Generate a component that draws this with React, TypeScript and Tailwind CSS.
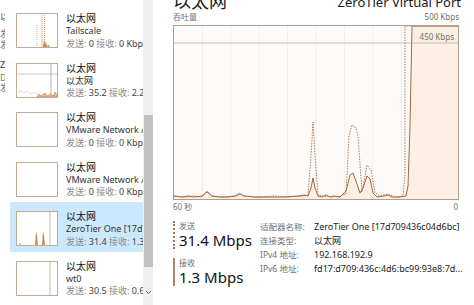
import React from 'react';

type Adapter = {
  title: string;
  name: string;
  send: string;
  recv: string;
  thumb: 'tailscale' | 'ethernet' | 'empty' | 'zerotier' | 'wt0';
  selected?: boolean;
};

const adapters: Adapter[] = [
  { title: '以太网', name: 'Tailscale', send: '0', recv: '0 Kbps', thumb: 'tailscale' },
  { title: '以太网', name: '以太网', send: '35.2', recv: '2.2 Mbps', thumb: 'ethernet' },
  { title: '以太网', name: 'VMware Network Adapter VMnet1', send: '0', recv: '0 Kbps', thumb: 'empty' },
  { title: '以太网', name: 'VMware Network Adapter VMnet8', send: '0', recv: '0 Kbps', thumb: 'empty' },
  { title: '以太网', name: 'ZeroTier One [17d709436c04d6bc]', send: '31.4', recv: '1.3 Mbps', thumb: 'zerotier', selected: true },
  { title: '以太网', name: 'wt0', send: '30.5', recv: '0.6 Mbps', thumb: 'wt0' },
];

const details = [
  ['适配器名称:', 'ZeroTier One [17d709436c04d6bc]'],
  ['连接类型:', '以太网'],
  ['IPv4 地址:', '192.168.192.9'],
  ['IPv6 地址:', 'fd17:d709:436c:4d6:bc99:93e8:7d...'],
];

// graph points, inner box 284 x 173
const recv = [
  [0, 170], [8, 171], [14, 170], [20, 171], [28, 170], [33, 166], [38, 170], [45, 171], [55, 171], [62, 170],
  [66, 168], [70, 170], [80, 171], [95, 171], [110, 171], [125, 170], [130, 169], [134, 170], [137, 162],
  [139, 152], [141, 162], [144, 170], [148, 171], [152, 169], [156, 171], [160, 170], [166, 171], [172, 165],
  [176, 149], [179, 147], [183, 158], [186, 167], [189, 162], [193, 150], [196, 153], [199, 167], [203, 171],
  [210, 170], [214, 169], [218, 171], [226, 171], [232, 170], [234, 160], [236, 100], [238, 0], [284, 0],
];

const send = [
  [0, 170], [10, 171], [20, 170], [28, 171], [33, 165], [38, 170], [48, 171], [60, 170], [66, 167], [70, 170],
  [85, 171], [100, 170], [115, 171], [128, 170], [134, 169], [137, 130], [139, 96], [141, 130], [144, 169],
  [150, 170], [158, 171], [166, 170], [172, 168], [175, 110], [178, 99], [182, 102], [184, 110], [188, 166],
  [191, 150], [193, 139], [197, 144], [199, 155], [201, 167], [206, 170], [214, 168], [222, 171], [229, 170],
  [231, 150], [231, 0], [284, 0],
];

const pts = (p: number[][]) => p.map((q) => q.join(',')).join(' ');

function Thumb({ kind }: { kind: Adapter['thumb'] }) {
  return (
    <svg viewBox="0 0 40 33" preserveAspectRatio="none" className="h-full w-full">
      {kind === 'tailscale' && (
        <>
          <line x1="20" y1="11" x2="20" y2="33" stroke="#b8a18a" strokeWidth="0.8" strokeDasharray="1 1" />
          <line x1="25" y1="1" x2="25" y2="33" stroke="#cfae90" strokeWidth="0.8" />
          <line x1="27.5" y1="1" x2="27.5" y2="33" stroke="#b98a63" strokeWidth="0.8" strokeDasharray="1 1" />
          <polygon points="26,33 27,25 28,31 29,27 30,33" fill="#c8804a" />
          <polygon points="30,33 31,30 33,33" fill="#d99a66" />
        </>
      )}
      {kind === 'ethernet' && (
        <>
          <line x1="0" y1="10" x2="40" y2="10" stroke="#c6b5a5" strokeWidth="0.8" />
          <line x1="34" y1="0" x2="34" y2="33" stroke="#b09a86" strokeWidth="0.8" />
          <polyline points="1,29 4,26 6,29 10,27 14,30 18,28 22,31" fill="none" stroke="#b5a697" strokeWidth="0.7" strokeDasharray="1 0.8" />
          <polygon points="20,33 22,30 24,32 28,29 30,32 34,30 36,32 38,28 40,31 40,33" fill="#e8b98f" stroke="#c07a45" strokeWidth="0.6" />
        </>
      )}
      {kind === 'zerotier' && (
        <>
          <line x1="33" y1="0" x2="33" y2="33" stroke="#c0a48a" strokeWidth="0.8" />
          <polygon points="18,33 19,19 20,24 21,33" fill="#d18a52" />
          <polygon points="25,33 26,19 27,24 28,33" fill="#d18a52" />
          <circle cx="3" cy="32" r="0.7" fill="#a0663a" />
        </>
      )}
      {kind === 'wt0' && <line x1="33" y1="0" x2="33" y2="33" stroke="#c0a48a" strokeWidth="0.8" />}
    </svg>
  );
}

function AdapterItem({ a }: { a: Adapter }) {
  return (
    <div className={`flex h-[49.5px] ${a.selected ? 'bg-[#cce8ff]' : ''}`}>
      <div className="ml-[6px] mt-[9px] h-[35px] w-[42px] shrink-0 border border-[#c2ab93] bg-white">
        <Thumb kind={a.thumb} />
      </div>
      <div className="ml-[8px] whitespace-nowrap pt-[7px]">
        <div className="text-[10px] leading-[14px] text-[#111]">{a.title}</div>
        <div className="text-[9px] leading-[12.5px] text-[#333]">{a.name}</div>
        <div className="text-[9px] leading-[12.5px] text-[#8a8a8a]">
          发送: <span className="text-[#444]">{a.send}</span> 接收: <span className="text-[#444]">{a.recv}</span>
        </div>
      </div>
    </div>
  );
}

export default function App() {
  return (
    <div className="flex h-[305px] w-[474px] overflow-hidden bg-white font-['Noto_Sans','Noto_Sans_CJK_SC',sans-serif] text-[#1a1a1a]">
      {/* edge of the pane on the left */}
      <div className="w-[10px] shrink-0">
        <div className="w-[5px] overflow-hidden whitespace-nowrap text-[9px] leading-[10px] text-[#777]">
          <div className="mt-[11.5px] text-[#555]">以太网</div>
          <div className="mt-[7.5px]">发送</div>
          <div className="mt-[0.5px]">发送</div>
          <div className="mt-[10px] text-[#333]">Z</div>
          <div className="mt-[3px]">D</div>
          <div>发送</div>
        </div>
      </div>

      {/* adapter list */}
      <div className="w-[133px] shrink-0 overflow-hidden pt-[4px]">
        {adapters.map((a, i) => (
          <AdapterItem key={i} a={a} />
        ))}
      </div>

      {/* scrollbar */}
      <div className="flex w-[10px] shrink-0 flex-col items-center bg-[#f0f0f0]">
        <div className="mt-[115px] h-[152px] w-[9px] bg-[#c1c1c1]" />
        <svg width="7" height="5" viewBox="0 0 7 5" className="mt-[23px]">
          <polyline points="1,1 3.5,3.5 6,1" fill="none" stroke="#606060" strokeWidth="1" />
        </svg>
      </div>

      {/* details */}
      <div className="flex min-w-0 flex-1 flex-col pl-[20px] pr-[15px]">
        <div className="flex h-[12px] items-start justify-between whitespace-nowrap">
          <span className="mt-[-8.5px] text-[18px] leading-[18px]">以太网</span>
          <span className="mt-[-4.5px] mr-[-2px] text-[13px] leading-[13px]">ZeroTier Virtual Port</span>
        </div>
        <div className="mb-[3px] flex h-[10px] justify-between text-[8px] leading-[10px] text-[#707070]">
          <span>吞吐量</span>
          <span>500 Kbps</span>
        </div>

        <div className="relative h-[175px] border border-[#b3a08c] bg-[#fdfbf9]">
          <svg viewBox="0 0 284 173" preserveAspectRatio="none" className="absolute inset-0 h-full w-full">
            {[28.4, 56.8, 85.2, 113.6, 142, 170.4, 198.8, 227.2, 255.6].map((x) => (
              <line key={x} x1={x} y1="0" x2={x} y2="173" stroke="#f5eee7" strokeWidth="1" />
            ))}
            <polygon points={`${pts(recv)} 284,173 0,173`} fill="#fcefe4" />
            <line x1="0" y1="17" x2="284" y2="17" stroke="#cdbba8" strokeWidth="1" />
            <polyline points={pts(send)} fill="none" stroke="#b07a52" strokeWidth="1" strokeDasharray="1.5 1.2" />
            <polyline points={pts(recv)} fill="none" stroke="#a5673f" strokeWidth="1" />
          </svg>
          <span className="absolute right-[4px] top-[6px] text-[8px] leading-[10px] text-[#707070]">450 Kbps</span>
        </div>

        <div className="mt-[2px] flex h-[10px] justify-between text-[8px] leading-[10px] text-[#707070]">
          <span>60 秒</span>
          <span className="pr-[1px]">0</span>
        </div>

        <div className="mt-[9px] flex">
          <div className="w-[87px] shrink-0">
            <div className="border-l-2 border-dotted border-[#a87550] pl-[4px]">
              <div className="text-[8px] leading-[10px] text-[#707070]">发送</div>
              <div className="text-[15px] leading-[18px] text-[#111]">31.4 Mbps</div>
            </div>
            <div className="mt-[9px] border-l-2 border-[#a58a6c] pl-[4px]">
              <div className="text-[8px] leading-[10px] text-[#707070]">接收</div>
              <div className="text-[15px] leading-[18px] text-[#111]">1.3 Mbps</div>
            </div>
          </div>
          <div className="mt-[-1px] min-w-0 flex-1">
            {details.map(([k, v]) => (
              <div key={k} className="flex h-[14px] items-center whitespace-nowrap">
                <span className="w-[54px] shrink-0 text-[8.5px] text-[#707070]">{k}</span>
                <span className="text-[9px] text-[#222]">{v}</span>
              </div>
            ))}
          </div>
        </div>
      </div>
    </div>
  );
}
